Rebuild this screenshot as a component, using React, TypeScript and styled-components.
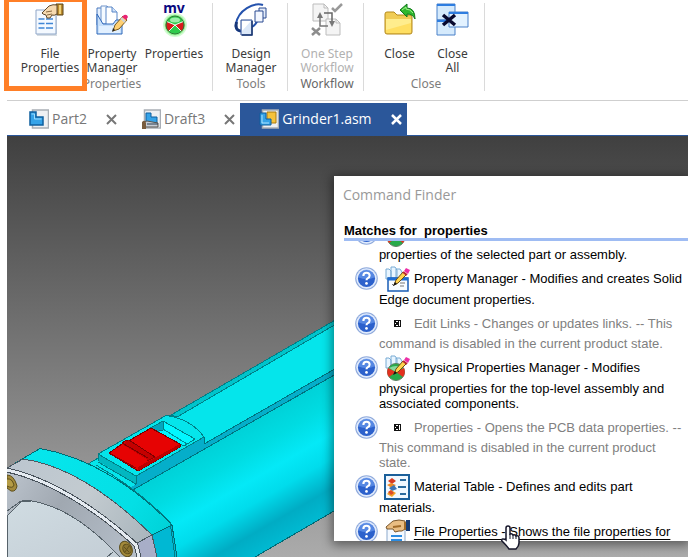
import React from "react";
import styled, { createGlobalStyle } from "styled-components";

const GlobalStyle = createGlobalStyle`
  * { box-sizing: border-box; }
  body { margin: 0; background: #fff; overflow: hidden; }
  button { border: 0; background: none; padding: 0; margin: 0; font: inherit; color: inherit; cursor: pointer; }
`;

const Window = styled.main`
  display: flex;
  flex-direction: column;
  min-height: 100vh;
  padding-left: 7px;
  font-family: "Noto Sans", "Open Sans", sans-serif;
`;

/* ---------- Ribbon ---------- */

const Ribbon = styled.header`
  display: flex;
  align-items: flex-start;
  padding: 3px 0 9px;
  border-bottom: 1px solid #cfcfcf;
`;

const Group = styled.section<{ $padding: string }>`
  display: flex;
  flex-direction: column;
  align-items: center;
  padding: ${(p) => p.$padding};
  border-right: 1px solid #dadada;
`;

const GroupButtons = styled.div`
  display: flex;
  gap: 6px;
  height: 74px;
  align-items: flex-start;
`;

const GroupLabel = styled.span<{ $strong?: boolean }>`
  font-size: 12px;
  line-height: 14px;
  color: ${(p) => (p.$strong ? "#666" : "#7d7d7d")};
`;

const RibbonButton = styled.button<{ $width: number }>`
  position: relative;
  display: flex;
  flex-direction: column;
  align-items: center;
  gap: 10px;
  width: ${(p) => p.$width}px;
  font-size: 12px;
  line-height: 14px;
  color: #3b3b3b;
  white-space: nowrap;

  &:disabled {
    color: #b1b1b1;
  }
`;

const RibbonIcon = styled.svg`
  width: 34px;
  height: 34px;
  flex: none;
  overflow: visible;
`;

const Highlight = styled.span`
  position: absolute;
  z-index: 1;
  inset: -6px -7px -16px -16px;
  border: 5px solid #ff7f27;
  pointer-events: none;
`;

/* ---------- Document tabs ---------- */

const TabBar = styled.nav`
  display: flex;
  padding: 2px 0 0 3px;
  border-bottom: 1px solid #2b579a;
`;

const Tab = styled.div<{ $active?: boolean }>`
  display: flex;
  align-items: center;
  height: 32px;
  padding: 0 5px 0 19px;
  background: ${(p) => (p.$active ? "#2b579a" : "transparent")};
  color: ${(p) => (p.$active ? "#fff" : "#777")};
`;

const TabButton = styled.button`
  display: flex;
  align-items: center;
  gap: 3px;
  font-family: "Open Sans", sans-serif;
  font-size: 14px;
  line-height: 20px;
`;

const TabIcon = styled.svg`
  width: 20px;
  height: 20px;
`;

const TabClose = styled.button`
  display: flex;
  margin-left: 19px;

  svg {
    width: 11px;
    height: 11px;
  }
`;

/* ---------- Model view ---------- */

const ModelView = styled.section`
  position: relative;
  flex: 1;
  display: grid;
  background: linear-gradient(#404040, #ababab);
  overflow: hidden;
`;

const Model = styled.svg`
  position: absolute;
  left: 0;
  bottom: 0;
  width: 681px;
  height: 421px;
`;

const Pointer = styled.svg`
  position: absolute;
  left: 493px;
  bottom: 7px;
  width: 20px;
  height: 25px;
`;

/* ---------- Command finder ---------- */

const Finder = styled.aside`
  position: relative;
  display: flex;
  flex-direction: column;
  margin: 40px 0 16px 48%;
  padding-left: 9px;
  background: #fff;
  box-shadow: 0 2px 10px 2px rgba(0, 0, 0, 0.45);
  min-width: 354px;
`;

const FinderTitle = styled.h2`
  margin: 9px 0 18px;
  font: 400 14px/20px "Open Sans", sans-serif;
  color: #999;
`;

const MatchesHeading = styled.h3`
  margin: 0 0 0 1px;
  border-bottom: 3px solid #9fbcf3;
  font: 700 13px/15px "Liberation Sans", Arial, sans-serif;
  color: #000;
  white-space: pre;
`;

const Results = styled.div`
  flex: 1 1 0;
  min-height: 0;
  overflow: hidden;
  font: 13px/15px "Liberation Sans", Arial, sans-serif;
`;

const ResultList = styled.ul`
  display: flex;
  flex-direction: column;
  gap: 4px;
  margin: -20px 0 0;
  padding: 0 0 0 12px;
  list-style: none;
`;

const ResultItem = styled.li<{ $disabled?: boolean }>`
  display: grid;
  grid-template-columns: 24px 1fr;
  align-items: start;
  color: ${(p) => (p.$disabled ? "#808080" : "#000")};
  white-space: nowrap;
`;

const HelpButton = styled.button`
  display: flex;
  padding-top: 1px;

  svg {
    width: 23px;
    height: 23px;
  }
`;

const ResultLink = styled.a`
  color: inherit;
  text-decoration: none;
`;

const ResultHead = styled.span<{ $compact?: boolean }>`
  display: grid;
  grid-template-columns: 35px auto;
  align-items: center;
  justify-content: start;
  height: ${(p) => (p.$compact ? 25 : 26)}px;
`;

const ResultIcon = styled.svg`
  width: 26px;
  height: 26px;
  margin-left: 5px;
`;

const HeadText = styled.span<{ $hover?: boolean }>`
  padding-bottom: 2px;
  text-decoration: ${(p) => (p.$hover ? "underline 1px" : "none")};
  text-decoration-skip-ink: none;
  text-underline-offset: 3px;
`;

const ResultRest = styled.span`
  display: block;
`;

/* ---------- Ribbon icons ---------- */

const FilePropertiesArt = () => (
  <g>
    <path d="M4 8h20v25H4z" fill="#b9c4cf" opacity=".6" />
    <path d="M3 7h20v24H3z" fill="#f4f9ff" stroke="#8fa6c8" />
    <path d="M5.500 16h6M5.500 20.500h6M5.500 25h6M13 16h7M13 20.500h7M13 25h7" stroke="#3f86d6" strokeWidth="1.500" />
    <path d="M23 1h7v11h-6z" fill="#b98a2e" stroke="#5c4418" />
    <path d="M27 2v9" stroke="#f0d27a" strokeWidth="2" />
    <path d="M10 9l6-6q4-2 8-1v9q-3 2-5 1l-2 3h-3l-1-3-3-1q-2-1 0-2z" fill="#f6dab0" stroke="#5f4a2e" />
    <path d="M13 9l6-1M14 12l5-1" stroke="#8a6a40" />
  </g>
);

const PropertyManagerArt = () => (
  <g>
    <path d="M2 5h6l3 3v14H2z" fill="#e5f1ff" stroke="#4a78bd" />
    <path d="M6 3h6l4 4v14H6z" fill="#f5faff" stroke="#6f93ca" />
    <path d="M11 4h6l5 5v14H11z" fill="#fff" stroke="#5b87c7" />
    <path d="M17 4v5h5" fill="#cfe2fa" stroke="#5b87c7" />
    <path d="M2 11v20h25V17h-6l-3 4H8z" fill="#c8e0fa" stroke="#2f68ba" />
    <path d="M4 23h21v7H4z" fill="#e2f0ff" />
    <path d="M18 28l2-6 8-9 4 4-8 9z" fill="#ffd071" stroke="#7a5a1e" />
    <path d="M27 14l2-2q3-1 4 2l-2 3z" fill="#e82374" />
    <path d="M26 15l4 4" stroke="#cfd2d8" strokeWidth="2" />
    <path d="M17 29l1-4 2 2z" fill="#222" />
  </g>
);

const MvArt = () => (
  <g>
    <text x="17" y="10" textAnchor="middle" fontFamily="Noto Sans, Open Sans, sans-serif" fontWeight="700" fontSize="14" fill="#0a0a80">
      mv
    </text>
    <circle cx="18" cy="22" r="12" fill="#8cf58c" opacity=".4" />
    <circle cx="18" cy="22" r="10.500" fill="#70ee70" opacity=".6" />
    <circle cx="18" cy="22" r="9" fill="#2ecb4b" />
    <path d="M18 22L9.500 18.500a9 9 0 0 0 2 10z" fill="#d91c1c" />
    <path d="M18 22l8.500-3.500a9 9 0 0 1-2 10z" fill="#d91c1c" />
    <path d="M18 22l-8.300-3.500M18 22l8.300-3.500M18 22l-6.500 6.500M18 22l6.500 6.500" stroke="#e9fff0" />
    <circle cx="18" cy="22" r="9" fill="none" stroke="#2c7a35" />
    <ellipse cx="18" cy="17" rx="5" ry="2.500" fill="#b9f8c2" opacity=".8" />
  </g>
);

const DesignManagerArt = () => (
  <g>
    <path d="M29 2C20-1 4 7 2 21c-1 5 1 8 6 7" fill="none" stroke="#2452ad" strokeWidth="2" />
    <path d="M2.500 19q-2 8 4 9" fill="none" stroke="#173779" strokeWidth="3" />
    <path d="M18 24q5-3 6-9" fill="none" stroke="#2452ad" strokeWidth="2" />
    <path d="M25 5h7v10h-7z" fill="#e3ebf8" stroke="#2a4b91" />
    <path d="M21 8h8v11h-8z" fill="#f3f7ff" stroke="#2a4b91" />
    <path d="M7 17h11v15H7z" fill="#dce8f8" stroke="#2a4b91" />
    <path d="M8 18h9l-9 10z" fill="#fff" />
    <path d="M18 18v14H8" fill="none" stroke="#1b3770" strokeWidth="1.500" />
  </g>
);

const WorkflowArt = () => (
  <g>
    <path d="M3 1h11l4 4v13H3z" fill="#f4f4f4" stroke="#bcbcbc" />
    <path d="M14 1v4h4" fill="none" stroke="#bcbcbc" />
    <path d="M16 16h10l4 4v12H16z" fill="#f4f4f4" stroke="#bcbcbc" />
    <path d="M26 16v4h4" fill="none" stroke="#bcbcbc" />
    <path d="M14 10h8v9" fill="none" stroke="#666" strokeWidth="1.500" />
    <path d="M19 18h6l-3 6z" fill="#777" />
    <path d="M18 23h-8v-8" fill="none" stroke="#777" strokeWidth="1.500" />
    <path d="M7 15h6l-3-6z" fill="#777" />
    <path d="M22 5l3 3 7-7" fill="none" stroke="#999" strokeWidth="2.500" />
    <path d="M2 25l8 7M10 25l-8 7" stroke="#8d8d8d" strokeWidth="2.500" />
  </g>
);

const CloseArt = () => (
  <g>
    <path d="M2 11q0-2 2-2h7l3 3h13q2 0 2 2v15q0 2-2 2H4q-2 0-2-2z" fill="#f0cc55" stroke="#b58a1c" />
    <path d="M3 16h25v13q0 1-2 1H4q-1 0-1-1z" fill="#ffdf62" />
    <path d="M3 16h25v4L3 27z" fill="#fff2a0" opacity=".7" />
    <path d="M17 7l7-6v4q8 0 8 11-2-5-8-5v3z" fill="#2eb82e" stroke="#12791c" />
    <path d="M19 7l4-3v2q4 0 7 4" fill="none" stroke="#a3f58b" />
  </g>
);

const CloseAllArt = () => (
  <g>
    <path d="M1 1h18v16H1z" fill="#d5eafc" stroke="#4a81c9" />
    <path d="M1 17h18v15H1z" fill="#d5eafc" stroke="#4a81c9" />
    <path d="M13 9h19v15H13z" fill="#e3f2ff" stroke="#4a81c9" />
    <path d="M1 2h18M1 18h12M13 10h19" stroke="#2e7de0" strokeWidth="2" />
    <path d="M7 12l12 10M19 12L7 22" stroke="#07082e" strokeWidth="3.500" />
  </g>
);

/* ---------- Result icons ---------- */

const HelpArt = () => (
  <svg viewBox="0 0 22 22" aria-hidden="true">
    <circle cx="11" cy="11" r="10.800" fill="#8faadc" />
    <circle cx="11" cy="11" r="9.800" fill="#e1ebfc" />
    <circle cx="11" cy="11" r="8.200" fill="#2c61cc" />
    <path d="M3.500 10a7.500 7.500 0 0 1 15 0q-7.500 3-15 0z" fill="#6d9df0" opacity=".65" />
    <path d="M8 8.500q0-3 3-3t3 2.700q0 1.600-1.700 2.400-1.300.7-1.300 2.100" fill="none" stroke="#fff" strokeWidth="2" />
    <circle cx="11" cy="15.700" r="1.300" fill="#fff" />
  </svg>
);

const SmallPages = () => (
  <path d="M2 3h3l2 2v8H2zM7 1h4l2 3v9H7zM12 3h4l2 3v7h-6z" fill="#e8f5ff" stroke="#78abd4" />
);

const SmallPencil = () => (
  <g>
    <path d="M10 19l2-5 7-8 3 3-8 8z" fill="#ffd34e" stroke="#6c4b12" />
    <path d="M20 5l2-3 4 2-2 4z" fill="#ec2fa6" />
    <path d="M19 6l4 3" stroke="#bb2630" strokeWidth="2" />
    <path d="M9 20l2-4 2 2z" fill="#111" />
  </g>
);

const SmallManagerArt = () => (
  <g>
    <SmallPages />
    <path d="M4 12h20v13H4z" fill="#f8fcff" stroke="#185cb5" strokeWidth="1.500" />
    <path d="M4 13h20" stroke="#1f6ed2" strokeWidth="3" />
    <path d="M8 18l2 2M16 17h5M16 20h4" stroke="#777" />
    <SmallPencil />
  </g>
);

const SmallPhysicalArt = () => (
  <g>
    <SmallPages />
    <circle cx="12" cy="17" r="8.500" fill="#27aa4a" stroke="#5f7f65" />
    <path d="M12 17l-8-4q-2 5 1 9zM12 17l8-4q2 5-1 9z" fill="#e3301e" />
    <path d="M5 13q7-4 14 0l-7 4z" fill="#85d99b" />
    <SmallPencil />
  </g>
);

const SmallMaterialArt = () => (
  <g>
    <path d="M1 1h24v24H1z" fill="#f0f8ff" stroke="#1a5f9a" strokeWidth="2" />
    <path d="M4 7l4-3 4 3-4 3z" fill="#d83b22" />
    <path d="M3 11l4-2 5 2-4 3z" fill="#ef8a24" />
    <path d="M5 14l5-3 3 4-5 2z" fill="#3e74b5" />
    <path d="M3 20l4-4 5 3-4 4z" fill="#f1a027" />
    <path d="M4 18l3-2 3 3-3 2z" fill="#dd4a29" />
    <path d="M16 6h6M14 13h8M16 20h6" stroke="#2b6b9e" strokeWidth="2" />
  </g>
);

const SmallFileArt = () => (
  <g>
    <path d="M3 8h18v20H3z" fill="#f4f9ff" stroke="#8ba9cc" />
    <path d="M7 17h11M7 21h11" stroke="#2b8be0" strokeWidth="2" />
    <path d="M22 1h4v11h-4z" fill="#173c75" />
    <path d="M2 8l7-6q6-2 12 0v8q-3 3-6 2l-4 1-2-3H3z" fill="#e9bd83" stroke="#79562c" />
    <path d="M9 8l8-1M21 3v8" stroke="#a16b28" strokeWidth="2" />
  </g>
);

const SmallMissingArt = () => (
  <g stroke="#111" fill="none" shapeRendering="crispEdges">
    <path d="M10 9.500h6v6h-6z" fill="#fff" />
    <path d="M12 11.500h2v2h-2zM11 10.500l4 4M15 10.500l-4 4" />
  </g>
);

/* ---------- Tab icons ---------- */

const DocPage = () => <path d="M3.500 1h16v18h-16z" fill="#eef0f3" stroke="#a9aeb5" strokeWidth="1.500" />;

const PartArt = () => (
  <g>
    <DocPage />
    <path d="M1 3h6v5h7v8H1z" fill="#35a3e8" stroke="#0e5f9e" strokeWidth="1.500" />
    <path d="M2.500 5h3v5h7" fill="none" stroke="#9adcff" />
  </g>
);

const DraftArt = () => (
  <g>
    <DocPage />
    <path d="M5 12V4h5v4h6v6H4z" fill="#35a3e8" stroke="#0e5f9e" />
    <path d="M2 13l4-1 11 2v4H4z" fill="#c7cdd5" stroke="#56534e" />
    <path d="M1 13q3-3 4 1v6H1z" fill="#795c3e" />
    <path d="M6 15h11" stroke="#283c50" />
  </g>
);

const AssemblyArt = () => (
  <g>
    <DocPage />
    <path d="M8 3h9v11H8z" fill="#f5c23b" stroke="#a87b12" />
    <path d="M1 4h6v6h5v6H1z" fill="#35a3e8" stroke="#0e5f9e" />
    <path d="M3 6v8h7" fill="none" stroke="#aee4ff" />
  </g>
);

const Cross = ({ bold }: { bold?: boolean }) => (
  <svg viewBox="0 0 11 11" aria-hidden="true">
    <path d="M1 1l9 9M10 1l-9 9" stroke="currentColor" strokeWidth={bold ? 2.5 : 2} />
  </svg>
);

/* ---------- 3D model ---------- */

const GrinderDrawing = () => (
  <Model viewBox="7 136 681 421" role="img" aria-label="Grinder assembly">
    <defs>
      <linearGradient id="tube" gradientUnits="userSpaceOnUse" x1="205" y1="450" x2="264" y2="552">
        <stop offset="0" stopColor="#00d2d8" />
        <stop offset=".2" stopColor="#00dce2" />
        <stop offset=".42" stopColor="#04e9f7" />
        <stop offset=".6" stopColor="#00dcec" />
        <stop offset=".82" stopColor="#00acc4" />
        <stop offset="1" stopColor="#00bad2" />
      </linearGradient>
      <linearGradient id="rim" gradientUnits="userSpaceOnUse" x1="40" y1="450" x2="170" y2="530">
        <stop offset="0" stopColor="#05e6ec" />
        <stop offset=".7" stopColor="#04dfe5" />
        <stop offset="1" stopColor="#00d2d8" />
      </linearGradient>
      <linearGradient id="metal" gradientUnits="userSpaceOnUse" x1="20" y1="460" x2="150" y2="540">
        <stop offset="0" stopColor="#bcc6cf" />
        <stop offset=".5" stopColor="#c3cbd0" />
        <stop offset="1" stopColor="#a9b5bc" />
      </linearGradient>
      <linearGradient id="face" gradientUnits="userSpaceOnUse" x1="7" y1="480" x2="130" y2="557">
        <stop offset="0" stopColor="#bac2cb" />
        <stop offset=".4" stopColor="#a0a8b1" />
        <stop offset="1" stopColor="#b5bec9" />
      </linearGradient>
      <linearGradient id="window" x1="0" y1="0" x2="1" y2="1">
        <stop offset="0" stopColor="#d0dce2" />
        <stop offset="1" stopColor="#c4ced6" />
      </linearGradient>
    </defs>
    <g strokeLinejoin="round" fill="none" shapeRendering="crispEdges">
      <path d="M98 470L205 440 420 320V461L255 557H170L120 490z" fill="url(#tube)" />
      <path d="M255 557L420 461" stroke="#006a75" />
      <path d="M88 464L171 415 420 271V321L205 444 130 490z" fill="#05e5eb" stroke="#007f86" />
      <path d="M171 415L420 271V275L177 417z" fill="#00c4cb" stroke="#007f86" />
      <path d="M127 487L204 444 420 320V326L131 491z" fill="#05aeca" stroke="#00727e" />
      <path d="M136 476L204 437V446L136 484z" fill="#05aeca" />
      <path d="M204 437V444M136 484L127 488" stroke="#00727e" />
      <path d="M98 454L166 415.500Q191 419 204 437L136 476z" fill="#05e5eb" stroke="#007f86" />
      <path d="M98 454V462L136 484V476z" fill="#02b7c0" stroke="#007f86" />
      <path d="M88 464L98 461 136 484 128 489 110 476z" fill="#05e5eb" />
      <path d="M98 462L136 484" stroke="#007f86" />
      <path d="M163 421L195 439 184 446 150 429z" fill="#02f7ff" stroke="#007f86" />
      <path d="M163 421V430L155 432 147 430z" fill="#05a5bd" stroke="#007f86" />
      <path d="M163 429L187 444" stroke="#008f98" />
      <path d="M109 453L122 444Q124 440 130 440L151 428 180 444V447L138 471z" fill="#e60303" stroke="#780000" />
      <path d="M138 467L180 444V447L138 471z" fill="#bd0000" />
      <path d="M122 444L148 460Q151 459 155 457L129 440z" fill="#c40000" />
      <path d="M122 443L148 458M129 440L155 457" stroke="#7b0000" />
      <path d="M109 453L136 468M147 461L155 457" stroke="#960000" />
      <path d="M152 535L172 525 177 557H156z" fill="#00b8d3" stroke="#006a75" />
      <path d="M7 468L40 448.500C90 457 136 488 172 525L152 535C108 492 66 467 23 460z" fill="url(#rim)" stroke="#006c73" />
      <path d="M96 465C124 481 149 501 170 522L175 557" stroke="#007d85" />
      <path d="M7 468L23 459C66 465 108 492 152 535L137 543C101 511 54 479 7 468z" fill="url(#metal)" stroke="#4c5962" />
      <path d="M137 543L152 535 157 557H139z" fill="#a8aec8" stroke="#4c5962" />
      <path d="M7 472C50 481 96 512 134 547L137 557H7z" fill="url(#face)" />
      <path d="M7 470C52 480 99 511 136 545L139 557" stroke="#47515a" strokeWidth="5" />
      <path d="M7 470C52 480 99 511 136 545L139 557" stroke="#e5ebf1" strokeWidth="3" />
      <path d="M7 516L23 500C58 502 91 526 120 557H7z" fill="url(#window)" stroke="#56626a" />
      <path d="M7 511L21 501 31 502M107 557L113 552" stroke="#56626a" />
    </g>
    <g fill="#a38a3b" stroke="#5f501d">
      <path d="M7 475Q14 475 17 486 16 492 11 491L7 488z" />
      <path d="M7 479Q12 478 14 485 13 489 7 486" fill="#b59c45" />
      <ellipse cx="126" cy="549" rx="6" ry="8" transform="rotate(-25 126 549)" />
      <ellipse cx="127" cy="549" rx="4" ry="5" fill="#8a732f" transform="rotate(-25 127 549)" />
      <path d="M124 547l5 5M129 546l-4 6" />
    </g>
  </Model>
);

/* ---------- Data ---------- */

type Command = {
  name: string;
  width: number;
  lines: string[];
  art: React.ReactNode;
  disabled?: boolean;
  highlighted?: boolean;
};
type CommandGroup = { label: string; padding: string; strong?: boolean; commands: Command[] };

const groups: CommandGroup[] = [
  {
    label: "Properties",
    padding: "0 8px 0 13px",
    commands: [
      { name: "file", width: 60, lines: ["File", "Properties"], art: <FilePropertiesArt />, highlighted: true },
      { name: "manager", width: 52, lines: ["Property", "Manager"], art: <PropertyManagerArt /> },
      { name: "physical", width: 60, lines: ["Properties"], art: <MvArt /> },
    ],
  },
  {
    label: "Tools",
    padding: "0 9px 0 11px",
    commands: [{ name: "design", width: 54, lines: ["Design", "Manager"], art: <DesignManagerArt /> }],
  },
  {
    label: "Workflow",
    padding: "0 9px 0 12px",
    strong: true,
    commands: [{ name: "workflow", width: 54, lines: ["One Step", "Workflow"], art: <WorkflowArt />, disabled: true }],
  },
  {
    label: "Close",
    padding: "0 8px 0 12px",
    commands: [
      { name: "close", width: 47, lines: ["Close"], art: <CloseArt /> },
      { name: "close-all", width: 47, lines: ["Close", "All"], art: <CloseAllArt /> },
    ],
  },
];

const tabs = [
  { name: "Part2", art: <PartArt /> },
  { name: "Draft3", art: <DraftArt /> },
  { name: "Grinder1.asm", art: <AssemblyArt />, active: true },
];

type Result = { head: string; rest: string[]; art: React.ReactNode; disabled?: boolean; hover?: boolean };

const results: Result[] = [
  {
    head: "Physical Properties - Displays physical",
    rest: ["properties of the selected part or assembly."],
    art: <SmallPhysicalArt />,
  },
  {
    head: "Property Manager - Modifies and creates Solid",
    rest: ["Edge document properties."],
    art: <SmallManagerArt />,
  },
  {
    head: "Edit Links - Changes or updates links. -- This",
    rest: ["command is disabled in the current product state."],
    art: <SmallMissingArt />,
    disabled: true,
  },
  {
    head: "Physical Properties Manager - Modifies",
    rest: ["physical properties for the top-level assembly and", "associated components."],
    art: <SmallPhysicalArt />,
  },
  {
    head: "Properties - Opens the PCB data properties. --",
    rest: ["This command is disabled in the current product", "state."],
    art: <SmallMissingArt />,
    disabled: true,
  },
  { head: "Material Table - Defines and edits part", rest: ["materials."], art: <SmallMaterialArt /> },
  { head: "File Properties - Shows the file properties for", rest: [], art: <SmallFileArt />, hover: true },
];

export default function App() {
  return (
    <Window>
      <GlobalStyle />
      <Ribbon>
        {groups.map((group) => (
          <Group key={group.label} $padding={group.padding}>
            <GroupButtons>
              {group.commands.map((command) => (
                <RibbonButton key={command.name} $width={command.width} disabled={command.disabled}>
                  <RibbonIcon viewBox="0 0 34 34" aria-hidden="true">
                    {command.art}
                  </RibbonIcon>
                  <span>
                    {command.lines.map((line, i) => (
                      <React.Fragment key={line}>
                        {i > 0 && <br />}
                        {line}
                      </React.Fragment>
                    ))}
                  </span>
                  {command.highlighted && <Highlight />}
                </RibbonButton>
              ))}
            </GroupButtons>
            <GroupLabel $strong={group.strong}>{group.label}</GroupLabel>
          </Group>
        ))}
      </Ribbon>

      <TabBar aria-label="Open documents">
        {tabs.map((tab) => (
          <Tab key={tab.name} $active={tab.active}>
            <TabButton>
              <TabIcon viewBox="0 0 20 20" aria-hidden="true">
                {tab.art}
              </TabIcon>
              {tab.name}
            </TabButton>
            <TabClose aria-label={`Close ${tab.name}`}>
              <Cross bold={tab.active} />
            </TabClose>
          </Tab>
        ))}
      </TabBar>

      <ModelView>
        <GrinderDrawing />
        <Finder>
          <FinderTitle>Command Finder</FinderTitle>
          <MatchesHeading>{"Matches for  properties"}</MatchesHeading>
          <Results>
            <ResultList>
              {results.map((result) => (
                <ResultItem key={result.head} $disabled={result.disabled}>
                  <HelpButton aria-label="Help">
                    <HelpArt />
                  </HelpButton>
                  <ResultLink href="#">
                    <ResultHead $compact={result.disabled}>
                      <ResultIcon viewBox="0 0 26 26" aria-hidden="true">
                        {result.art}
                      </ResultIcon>
                      <HeadText $hover={result.hover}>{result.head}</HeadText>
                    </ResultHead>
                    {result.rest.map((line) => (
                      <ResultRest key={line}>{line}</ResultRest>
                    ))}
                  </ResultLink>
                </ResultItem>
              ))}
            </ResultList>
          </Results>
        </Finder>
        <Pointer viewBox="0 0 20 25" aria-hidden="true">
          <path
            d="M6 15V3q0-2 2-2t2 2v6q2-1 3 1 2-1 3 1 3-1 3 2v5q0 3-3 6H9q-2-3-7-8-1-2 1-2 2 0 3 1z"
            fill="#fff"
            stroke="#16162a"
            strokeWidth="1.500"
          />
          <path d="M10 9v5M13 10v4M16 11v3" stroke="#16162a" />
        </Pointer>
      </ModelView>
    </Window>
  );
}
